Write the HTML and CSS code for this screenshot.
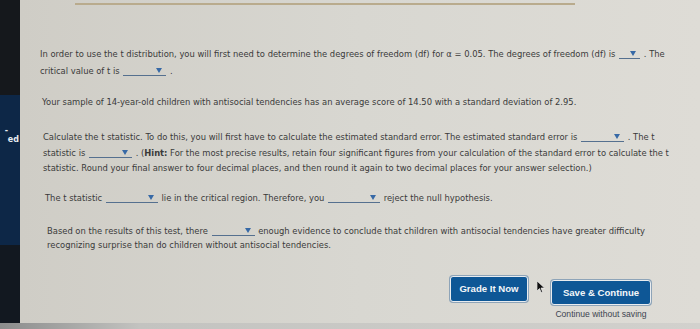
FILE: index.html
```html
<!DOCTYPE html>
<html>
<head>
<meta charset="utf-8">
<link rel="stylesheet" href="styles.css">
</head>
<body>
<div class="screen">
  <aside class="side">
    <div class="side-top"></div>
    <div class="side-nav"><span class="dash">-</span><span class="ed">ed</span></div>
    <div class="side-bottom"></div>
  </aside>
  <main class="main">
    <div class="topline"></div>
    <p class="para p1">In order to use the t distribution, you will first need to determine the degrees of freedom (df) for α = 0.05. The degrees of freedom (df) is <span class="dd w-xs"><span class="tri"></span></span> . The<br>critical value of t is <span class="dd w-m"><span class="tri"></span></span> .</p>
    <p class="para p2">Your sample of 14-year-old children with antisocial tendencies has an average score of 14.50 with a standard deviation of 2.95.</p>
    <p class="para p3">Calculate the t statistic. To do this, you will first have to calculate the estimated standard error. The estimated standard error is <span class="dd w-m"><span class="tri"></span></span> . The t<br>statistic is <span class="dd w-m"><span class="tri"></span></span> . (<b>Hint:</b> For the most precise results, retain four significant figures from your calculation of the standard error to calculate the t<br>statistic. Round your final answer to four decimal places, and then round it again to two decimal places for your answer selection.)</p>
    <p class="para p4">The t statistic <span class="dd w-l"><span class="tri"></span></span> lie in the critical region. Therefore, you <span class="dd w-l"><span class="tri"></span></span> reject the null hypothesis.</p>
    <p class="para p5">Based on the results of this test, there <span class="dd w-m"><span class="tri"></span></span> enough evidence to conclude that children with antisocial tendencies have greater difficulty<br>recognizing surprise than do children without antisocial tendencies.</p>
    <div class="actions">
      <button class="btn grade">Grade It Now</button>
      <svg class="cursor" width="8" height="12" viewBox="0 0 8 12"><path d="M0 0 L0 10 L2.5 7.5 L4.2 11.5 L5.6 10.9 L4 7 L7.5 7 Z" fill="#111" stroke="#fff" stroke-width="0.6"/></svg>
      <div class="save-col">
        <button class="btn save">Save &amp; Continue</button>
        <span class="skip">Continue without saving</span>
      </div>
    </div>
  </main>
</div>
<div class="bottomstrip"></div>
</body>
</html>
```
FILE: styles.css
```css
html, body {
  margin: 0;
  padding: 0;
  width: 700px;
  height: 329px;
  overflow: hidden;
  background: #c9c8c2;
}
.screen {
  display: flex;
  height: 323px;
}
.side {
  width: 20px;
  display: flex;
  flex-direction: column;
  flex-shrink: 0;
}
.side-top {
  height: 95px;
  background: #15181c;
}
.side-nav {
  height: 150px;
  background: #0d2747;
  display: flex;
  flex-direction: column;
  align-items: flex-end;
  padding-top: 31px;
  box-sizing: border-box;
  font-family: "DejaVu Sans", sans-serif;
  font-weight: bold;
  color: #e8ecf2;
  font-size: 8px;
  line-height: 9px;
}
.side-nav .dash { padding-right: 12px; }
.side-nav .ed { padding-right: 1px; }
.side-bottom {
  flex: 1;
  background: #121820;
}
.main {
  flex: 1;
  background: linear-gradient(90deg, #cfcdc6 0%, #d8d7d1 50%, #dedcd6 100%);
  font-family: "DejaVu Sans", Verdana, sans-serif;
  font-size: 8.4px;
  color: #3a3a3a;
  padding-left: 20px;
  position: relative;
}
.topline {
  width: 500px;
  height: 2px;
  margin-left: 35px;
  margin-top: 3px;
  background: #b9ab8d;
}
.para {
  margin: 0;
  line-height: 16px;
}
.p1 { margin-top: 41px; line-height: 17px; }
.p2 { margin-top: 14px; padding-left: 2px; }
.p3 { margin-top: 20px; padding-left: 3px; line-height: 15.5px; }
.p4 { margin-top: 13px; padding-left: 5px; }
.p5 { margin-top: 18px; padding-left: 7px; line-height: 14.5px; }
b { font-weight: bold; }
.dd {
  display: inline-block;
  position: relative;
  height: 9px;
  border-bottom: 1px solid #55708f;
  vertical-align: -2px;
  margin: 0 1px;
}
.w-xs { width: 21px; }
.w-m { width: 43px; }
.w-l { width: 52px; }
.tri {
  position: absolute;
  right: 4px;
  top: 2px;
  width: 0;
  height: 0;
  border-left: 3.5px solid transparent;
  border-right: 3.5px solid transparent;
  border-top: 5px solid #3769a6;
}
.actions {
  display: flex;
  align-items: flex-start;
  margin-top: 23px;
  margin-left: 410px;
}
.btn {
  font-family: "Liberation Sans", Arial, sans-serif;
  font-weight: bold;
  font-size: 9.6px;
  color: #f4f6f9;
  background: #0e5796;
  border: 1px solid #e9ecef;
  border-radius: 3px;
  box-shadow: 0 0 0 1px #8ea4b8;
  padding: 0;
}
.grade { width: 78px; height: 26px; }
.cursor { margin-left: 9px; margin-top: 5px; }
.save-col {
  display: flex;
  flex-direction: column;
  align-items: center;
  margin-left: 6px;
  margin-top: 4px;
}
.save { width: 100px; height: 25px; }
.skip {
  font-family: "Liberation Sans", Arial, sans-serif;
  font-size: 8.6px;
  color: #3d4450;
  margin-top: 4px;
}
.bottomstrip {
  height: 6px;
  background: linear-gradient(90deg, #8b8c8c 0%, #c3c3c0 20%, #d2d1cd 100%);
}
```
